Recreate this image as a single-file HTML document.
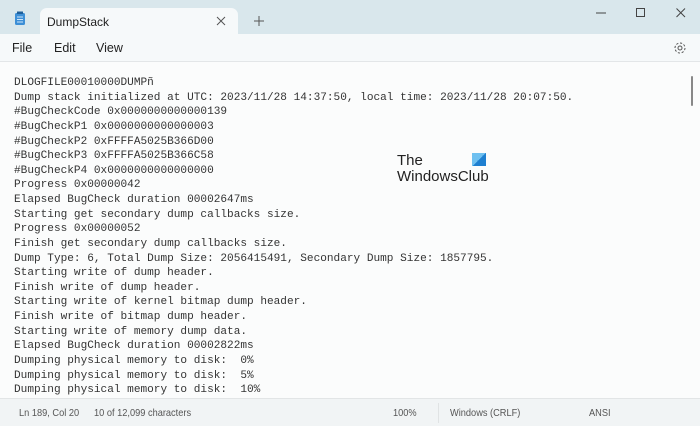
<!DOCTYPE html>
<html><head><style>
*{margin:0;padding:0;box-sizing:border-box}
body{width:700px;height:426px;overflow:hidden;background:#fbfcfc;font-family:"Liberation Sans",sans-serif;position:relative}
.title{position:absolute;left:0;top:0;width:700px;height:34px;background:#d9e7ec}
.tab{position:absolute;left:40px;top:8px;width:198px;height:27px;background:#f6f9fa;border-radius:7px 7px 0 0}
.menu{position:absolute;left:0;top:34px;width:700px;height:28px;background:#f6f9fa;border-bottom:1px solid #e3e6e8}
.menu span{position:absolute;top:7px;font-size:12.5px;color:#222}
.txt{position:absolute;left:14px;top:76px;font-family:"Liberation Mono",monospace;font-size:11.1px;line-height:14.62px;color:#333;white-space:pre}
.status{position:absolute;left:0;top:398px;width:700px;height:28px;background:#f1f4f5;border-top:1px solid #e2e5e6;font-size:10.5px;color:#555}
.status span{position:absolute;top:8px;white-space:nowrap;transform:scaleX(0.88);transform-origin:left}
.sep{position:absolute;top:4px;width:1px;height:20px;background:#e0e3e4}
</style></head><body>
<div class="title">
 <svg style="position:absolute;left:14px;top:11px" width="12" height="15"><rect x="1" y="2" width="10" height="12" rx="1.5" fill="#3d8fd6"/><rect x="3" y="0.5" width="6" height="2.5" fill="#1f5f9a"/><path d="M3 6h6M3 8.5h6M3 11h6" stroke="#cfe6fa" stroke-width="1"/></svg>
 <div class="tab"><span style="position:absolute;left:7px;top:7px;font-size:12px;color:#222">DumpStack</span>
 <svg style="position:absolute;left:176px;top:8px" width="10" height="10"><path d="M1 1L9 9M9 1L1 9" stroke="#555" stroke-width="1"/></svg></div>
 <svg style="position:absolute;left:254px;top:16px" width="10" height="10"><path d="M5 0V10M0 5H10" stroke="#555" stroke-width="1"/></svg>
 <svg style="position:absolute;left:596px;top:12px" width="10" height="2"><path d="M0 1H10" stroke="#444" stroke-width="1"/></svg>
 <svg style="position:absolute;left:636px;top:8px" width="10" height="10"><rect x="0.5" y="0.5" width="8" height="8" fill="none" stroke="#444"/></svg>
 <svg style="position:absolute;left:676px;top:8px" width="10" height="10"><path d="M0.5 0.5L9 9M9 0.5L0.5 9" stroke="#444" stroke-width="1"/></svg>
</div>
<div class="menu"><span style="left:12px">File</span><span style="left:54px">Edit</span><span style="left:96px">View</span>
<svg style="position:absolute;left:673px;top:7px" width="14" height="14" viewBox="0 0 14 14"><circle cx="7" cy="7" r="2" fill="none" stroke="#555"/><circle cx="7" cy="7" r="5" fill="none" stroke="#555" stroke-dasharray="2.2 1.7"/></svg></div>
<div class="txt">DLOGFILE00010000DUMPñ
Dump stack initialized at UTC: 2023/11/28 14:37:50, local time: 2023/11/28 20:07:50.
#BugCheckCode 0x0000000000000139
#BugCheckP1 0x0000000000000003
#BugCheckP2 0xFFFFA5025B366D00
#BugCheckP3 0xFFFFA5025B366C58
#BugCheckP4 0x0000000000000000
Progress 0x00000042
Elapsed BugCheck duration 00002647ms
Starting get secondary dump callbacks size.
Progress 0x00000052
Finish get secondary dump callbacks size.
Dump Type: 6, Total Dump Size: 2056415491, Secondary Dump Size: 1857795.
Starting write of dump header.
Finish write of dump header.
Starting write of kernel bitmap dump header.
Finish write of bitmap dump header.
Starting write of memory dump data.
Elapsed BugCheck duration 00002822ms
Dumping physical memory to disk:  0%
Dumping physical memory to disk:  5%
Dumping physical memory to disk:  10%</div>
<div style="position:absolute;left:691px;top:76px;width:2px;height:30px;background:#888;border-radius:1px"></div>
<div style="position:absolute;left:397px;top:153px;font-size:15px;line-height:16px;color:#222">The<br>WindowsClub</div>
<div style="position:absolute;left:472px;top:153px;width:14px;height:13px;background:linear-gradient(135deg,#6ec0f0 50%,#1e7fd0 50%)"></div>
<div class="status">
<span style="left:19px">Ln 189, Col 20</span><span style="left:94px">10 of 12,099 characters</span>
<span style="left:393px">100%</span><div class="sep" style="left:438px"></div><span style="left:450px">Windows (CRLF)</span><span style="left:589px">ANSI</span></div>
</body></html>
